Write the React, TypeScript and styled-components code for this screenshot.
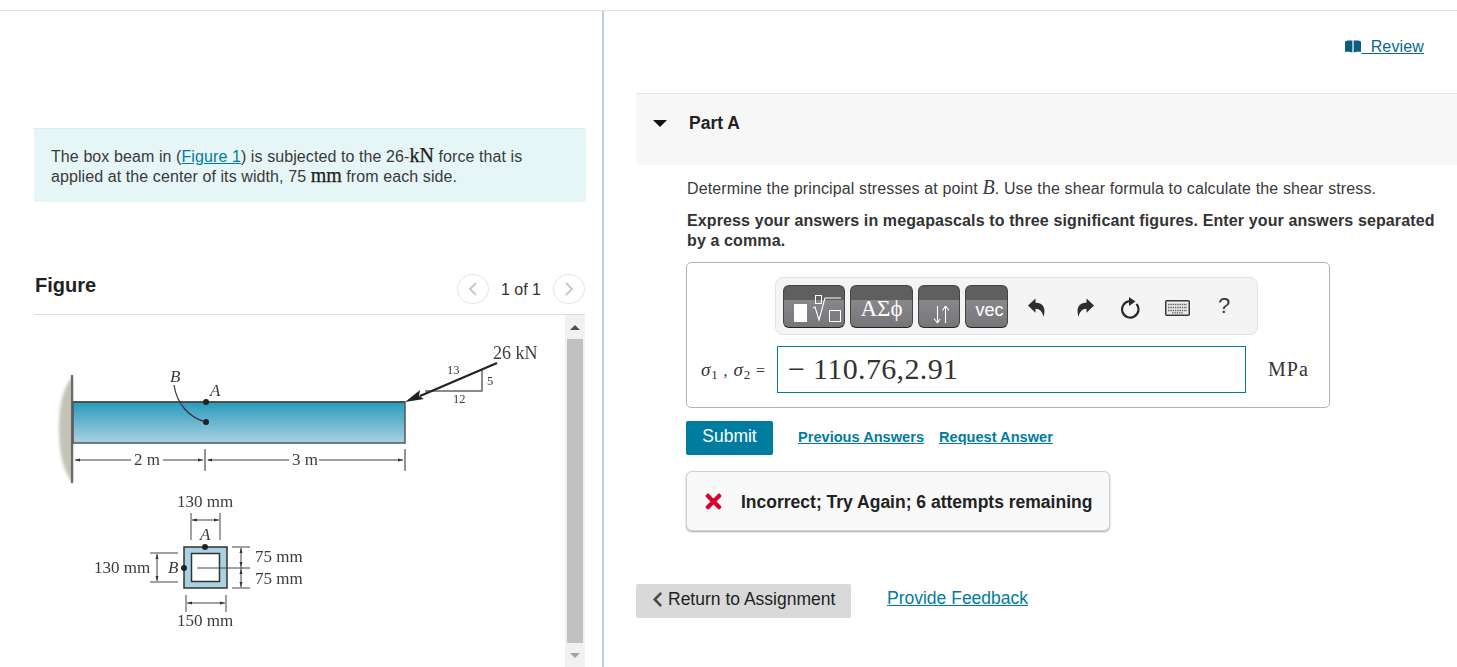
import React from "react";
import styled, { createGlobalStyle } from "styled-components";
import { FaChevronLeft, FaTimes } from "react-icons/fa";

const Global = createGlobalStyle`
  html, body { margin: 0; padding: 0; background: #fff; }
  body { font-family: "Liberation Sans", Arial, sans-serif; color: #333; font-size: 16px; }
`;

const Page = styled.div`
  box-sizing: border-box;
  width: 1457px;
  height: 667px;
  padding-top: 10px;
  overflow: hidden;
`;
const Columns = styled.div`
  display: grid;
  grid-template-columns: 604px 1fr;
  height: 657px;
  border-top: 1px solid #e3e3e3;
`;
const LeftCol = styled.section`
  display: flex;
  flex-direction: column;
  padding: 117px 17px 0 34px;
  border-right: 2px solid #bccfe2;
  box-sizing: border-box;
  height: 656px;
`;
const Intro = styled.div`
  box-sizing: border-box;
  height: 74px;
  margin-right: -1px;
  padding: 18px 17px 0;
  background: #e6f5f6;
  border-top: 1px solid #dcecee;
  line-height: 20px;
  font-size: 16px;
  letter-spacing: 0.09px;
  color: #3a3a3a;
`;
const FigLink = styled.a`
  color: #007c9e;
  text-decoration: underline;
`;
const Serif = styled.span`
  font-family: "Liberation Serif", serif;
  font-size: 20px;
  line-height: 0;
`;
const MathUnit = styled(Serif)`
  color: #222;
  letter-spacing: 0;
  -webkit-text-stroke: 0.25px #222;
`;
const FigureHead = styled.div`
  display: flex;
  align-items: center;
  justify-content: space-between;
  box-sizing: border-box;
  height: 45px;
  margin-top: 68px;
  padding-bottom: 9px;
  border-bottom: 1px solid #dcdcdc;
`;
const FigureTitle = styled.h2`
  margin: 0 0 4px 1px;
  font-size: 20px;
  font-weight: 700;
  color: #222;
`;
const Pager = styled.div`
  display: flex;
  align-items: center;
  gap: 12px;
  margin-top: 2px;
  font-size: 16px;
  color: #333;
`;
const PagerText = styled.span`
  margin-top: 2px;
`;
const PagerBtn = styled.span`
  box-sizing: border-box;
  width: 32px;
  height: 30px;
  border: 1px solid #e4e4e4;
  border-radius: 50%;
  display: flex;
  align-items: center;
  justify-content: center;
`;
const FigureScroll = styled.div`
  display: flex;
  height: 352px;
`;
const FigureSvg = styled.svg`
  display: block;
  width: 531px;
  height: 352px;
  flex: none;
  filter: blur(0.35px);
`;
const Scrollbar = styled.div`
  width: 20px;
  height: 352px;
  background: #f1f1f1;
  display: flex;
  flex-direction: column;
  align-items: center;
  padding: 0 2px;
  box-sizing: border-box;
`;
const ScrollArrow = styled.div<{ $down?: boolean }>`
  height: 24px;
  flex: none;
  display: flex;
  align-items: center;
  justify-content: center;
  &::before {
    content: "";
    border-left: 5px solid transparent;
    border-right: 5px solid transparent;
    ${(p) => (p.$down ? "border-top: 5px solid #a3a3a3;" : "border-bottom: 5px solid #505050;")}
  }
`;
const ScrollThumb = styled.div`
  width: 16px;
  height: 304px;
  background: #c1c1c1;
  flex: none;
`;

const RightCol = styled.section`
  padding-left: 32px;
`;
const ReviewRow = styled.div`
  display: flex;
  justify-content: flex-end;
  height: 82px;
  padding: 26px 33px 0 0;
  box-sizing: border-box;
`;
const ReviewLink = styled.a`
  display: flex;
  align-items: flex-start;
  color: #0a6a8a;
  text-decoration: underline;
  font-size: 16px;
  letter-spacing: 0.15px;
  line-height: 20px;
  white-space: pre;
`;
const BookIcon = styled.svg`
  width: 16px;
  height: 13px;
  margin-top: 3px;
`;
const PartHeader = styled.div`
  box-sizing: border-box;
  height: 72px;
  display: flex;
  align-items: center;
  background: #f7f7f7;
  border-top: 1px solid #e4e4e4;
  padding: 0 0 12px 17px;
`;
const Caret = styled.span`
  width: 0;
  height: 0;
  border-left: 7px solid transparent;
  border-right: 7px solid transparent;
  border-top: 7px solid #111;
  margin-right: 22px;
`;
const PartTitle = styled.h3`
  margin: 0;
  font-size: 17.5px;
  font-weight: 700;
  color: #222;
`;
const PartBody = styled.div`
  padding: 14px 15px 0 50px;
`;
const Question = styled.p`
  margin: 0 0 0 1px;
  line-height: 20px;
  letter-spacing: 0.13px;
  color: #3a3a3a;
`;
const Instruction = styled.p`
  margin: 12px 0 0 1px;
  line-height: 20px;
  letter-spacing: 0.12px;
  font-weight: 700;
  color: #333;
`;
const AnswerBox = styled.div`
  box-sizing: border-box;
  width: 644px;
  height: 146px;
  margin-top: 11px;
  border: 1px solid #b3b3b3;
  border-radius: 5px;
  padding: 14px 0 0 14px;
`;
const Toolbar = styled.div`
  box-sizing: border-box;
  width: 483px;
  height: 58px;
  margin-left: 74px;
  background: #f4f4f4;
  border: 1px solid #e2e2e2;
  border-radius: 8px;
  display: flex;
  align-items: center;
  padding: 0 0 0 7px;
`;
const TemplateBtn = styled.div<{ $w: number }>`
  box-sizing: border-box;
  width: ${(p) => p.$w}px;
  height: 43px;
  margin-right: 5px;
  border-radius: 6px;
  border: 1px solid #444;
  border-bottom: 1.5px solid #222;
  background: linear-gradient(#5f5f5f 0, #5f5f5f 14px, #88888c 14px, #76767a 100%);
  color: #fff;
  display: flex;
  align-items: flex-end;
  justify-content: center;
  overflow: hidden;
`;
const BtnGlyphs = styled.span`
  font-family: "Liberation Serif", serif;
  font-size: 23px;
  line-height: 36px;
`;
const BtnVec = styled.span`
  font-size: 18px;
  line-height: 34px;
  padding-left: 6px;
`;
const RootSvg = styled.svg`
  margin-bottom: 2px;
`;
const ArrowsSvg = styled.svg`
  margin: 0 0 2px 6px;
`;
const ToolIcon = styled.div<{ $w: number }>`
  width: ${(p) => p.$w}px;
  display: flex;
  justify-content: center;
  align-items: center;
  color: #3a3a3a;
  font-size: 22px;
  flex: none;
  margin-top: 4px;
`;
const UndoSlot = styled(ToolIcon)`
  margin-left: 3px;
`;
const HelpSlot = styled(ToolIcon)`
  margin-top: 0;
`;
const InputRow = styled.div`
  display: flex;
  align-items: center;
  margin-top: 11px;
`;
const VarLabel = styled.span`
  font-family: "Liberation Serif", serif;
  font-size: 16px;
  width: 76px;
  color: #333;
  letter-spacing: 0.9px;
  white-space: pre;
`;
const Sub = styled.sub`
  font-size: 13px;
  line-height: 0;
  font-style: normal;
  vertical-align: -3px;
`;
const Sigma = styled.i`
  font-size: 19px;
`;
const AnswerInput = styled.div`
  box-sizing: border-box;
  width: 469px;
  height: 47px;
  border: 1px solid #007c9e;
  padding-left: 10px;
  font-family: "Liberation Serif", serif;
  font-size: 30px;
  line-height: 43px;
  color: #333;
  letter-spacing: 0.35px;
  white-space: pre;
`;
const Unit = styled.span`
  font-family: "Liberation Serif", serif;
  font-size: 20px;
  letter-spacing: 1px;
  margin-left: 22px;
  color: #333;
`;
const ActionRow = styled.div`
  display: flex;
  align-items: center;
  margin-top: 13px;
`;
const SubmitBtn = styled.button`
  width: 87px;
  height: 34px;
  border: 0;
  border-radius: 2px;
  background: #007c9e;
  color: #fff;
  font: 17.5px "Liberation Sans", sans-serif;
  padding: 0 0 3px;
  margin-right: 25px;
`;
const ActionLink = styled.a`
  font-size: 14.6px;
  font-weight: 700;
  color: #007c9e;
  text-decoration: underline;
  margin: 0 15px 3px 0;
`;
const Feedback = styled.div`
  box-sizing: border-box;
  display: flex;
  align-items: center;
  width: 424px;
  height: 60px;
  margin: 16px 0 0;
  padding-left: 16px;
  background: #f9f9f9;
  border: 1px solid #d0d0d0;
  border-radius: 6px;
  box-shadow: 0 1px 2px #aaa;
  font-size: 17.5px;
  font-weight: 700;
  color: #222;
  white-space: nowrap;
`;
const FeedbackText = styled.span`
  margin-top: 2px;
`;
const RedX = styled(FaTimes)`
  color: #d9002a;
  font-size: 23px;
  margin-right: 17px;
  flex: none;
  width: 21px;
`;
const FooterRow = styled.div`
  display: flex;
  align-items: center;
  margin-top: 53px;
`;
const ReturnBtn = styled.div`
  box-sizing: border-box;
  width: 215px;
  height: 34px;
  background: #d9d9d9;
  border-radius: 2px;
  display: flex;
  align-items: center;
  padding: 0 0 3px 13px;
  font-size: 17.5px;
  color: #222;
  margin-right: 36px;
`;
const ReturnChevron = styled(FaChevronLeft)`
  color: #4a4a4a;
  font-size: 17px;
  margin-right: 2px;
`;
const FeedbackLink = styled.a`
  font-size: 17.5px;
  color: #007c9e;
  text-decoration: underline;
  margin-bottom: 5px;
`;

const Chevron = ({ d }: { d: string }) => (
  <svg width="12" height="16" viewBox="0 0 12 16" fill="none" stroke="#c8c8c8" strokeWidth="2">
    <path d={d} />
  </svg>
);

const serif = "'Liberation Serif', serif";
const DimText = ({ x, y, children, size = 17 }: { x: number; y: number; children: React.ReactNode; size?: number }) => (
  <text x={x} y={y} fontFamily={serif} fontSize={size} fill="#3c3c3c">{children}</text>
);
const Italic = ({ x, y, children }: { x: number; y: number; children: React.ReactNode }) => (
  <text x={x} y={y} fontFamily={serif} fontSize={17} fontStyle="italic" fill="#3c3c3c">{children}</text>
);
const Head = ({ x, y, dir }: { x: number; y: number; dir: "l" | "r" | "u" | "d" }) => {
  const pts = {
    l: `${x},${y} ${x + 5},${y - 1.5} ${x + 5},${y + 1.5}`,
    r: `${x},${y} ${x - 5},${y - 1.5} ${x - 5},${y + 1.5}`,
    u: `${x},${y} ${x - 1.5},${y + 5} ${x + 1.5},${y + 5}`,
    d: `${x},${y} ${x - 1.5},${y - 5} ${x + 1.5},${y - 5}`,
  }[dir];
  return <polygon points={pts} fill="#333" />;
};

const Drawing = () => (
  <FigureSvg viewBox="34 315 531 352">
    <defs>
      <linearGradient id="beam" x1="0" y1="0" x2="0" y2="1">
        <stop offset="0" stopColor="#279abc" />
        <stop offset="1" stopColor="#abd2e2" />
      </linearGradient>
      <filter id="soft" x="-50%" y="-10%" width="200%" height="120%">
        <feGaussianBlur stdDeviation="1.5" />
      </filter>
    </defs>
    <path d="M73 376 C64 386 59 402 59 428 C59 456 64 472 73 483Z" fill="#c4c4b6" filter="url(#soft)" />
    <g fill="none" stroke="#555" strokeWidth="1">
      <path d="M72 375V483" strokeWidth="2.2" stroke="#6a6a6a" />
      <rect x="73" y="402" width="332" height="41" fill="url(#beam)" strokeWidth="1.5" />
      <path d="M73 402H405" stroke="#444" strokeWidth="1.5" />
      <path d="M174 385C177 405 190 418 206 422" stroke="#333" strokeWidth="1.2" />
      <path d="M75 460H131M163 460H203M208 460H289M319 460H403" stroke="#444" strokeWidth="1.2" />
      <path d="M205 449V471M405 449V471" stroke="#666" strokeWidth="1.4" />
      <path d="M425 391H482V370" stroke="#666" strokeWidth="1.5" />
      <path d="M497 363L420 396" stroke="#222" strokeWidth="2.2" />
      <path d="M191 513V540M220 513V540M192 520H219" stroke="#444" />
      <path d="M150 553H178M150 582H178M157 554V581" stroke="#444" />
      <path d="M232 547H250M232 588H250M241 548V587" stroke="#444" />
      <path d="M186 595V612M226 595V612M187 603H225" stroke="#444" />
    </g>
    <Head x={75} y={460} dir="l" />
    <Head x={203} y={460} dir="r" />
    <Head x={207} y={460} dir="l" />
    <Head x={403} y={460} dir="r" />
    <Head x={192} y={520} dir="l" />
    <Head x={219} y={520} dir="r" />
    <Head x={157} y={554} dir="u" />
    <Head x={157} y={581} dir="d" />
    <Head x={241} y={548} dir="u" />
    <Head x={241} y={567} dir="d" />
    <Head x={241} y={569} dir="u" />
    <Head x={241} y={587} dir="d" />
    <Head x={187} y={603} dir="l" />
    <Head x={225} y={603} dir="r" />
    <path d="M405 402L420 390L419 396L424 399Z" fill="#222" />
    <circle cx="206" cy="402" r="3" fill="#222" />
    <circle cx="206" cy="422" r="3" fill="#222" />
    <path fillRule="evenodd" d="M184 547H227V588H184ZM191.500 553.500V581.500H219.500V553.500Z" fill="#a9d3e2" stroke="#333" strokeWidth="1.5" />
    <path d="M197 568H250" stroke="#444" fill="none" />
    <circle cx="205" cy="547" r="3" fill="#222" />
    <circle cx="184" cy="568" r="3" fill="#222" />
    <Italic x={170} y={382}>B</Italic>
    <Italic x={210} y={396}>A</Italic>
    <DimText x={134} y={465}>2 m</DimText>
    <DimText x={292} y={465}>3 m</DimText>
    <DimText x={493} y={359} size={18}>26 kN</DimText>
    <DimText x={447} y={374} size={12.5}>13</DimText>
    <DimText x={487} y={385} size={12.5}>5</DimText>
    <DimText x={453} y={403} size={12.5}>12</DimText>
    <DimText x={177} y={507}>130 mm</DimText>
    <Italic x={200} y={540}>A</Italic>
    <Italic x={168} y={573}>B</Italic>
    <DimText x={94} y={573}>130 mm</DimText>
    <DimText x={255} y={562}>75 mm</DimText>
    <DimText x={255} y={584}>75 mm</DimText>
    <DimText x={177} y={626}>150 mm</DimText>
  </FigureSvg>
);

const UndoGlyph = ({ flip }: { flip?: boolean }) => (
  <svg width="18" height="20" viewBox="0 0 18 20" style={flip ? { transform: "scaleX(-1)" } : undefined}>
    <path d="M0 7.500L7.500 0.500V4.700C14 4.700 18.500 8.500 15.500 19C14.500 14 12 10.800 7.500 10.800V14.700Z" fill="#2e2e2e" />
  </svg>
);

export default function App() {
  return (
    <Page>
      <Global />
      <Columns>
        <LeftCol>
          <Intro>
            The box beam in (<FigLink>Figure 1</FigLink>) is subjected to the 26-<MathUnit>kN</MathUnit> force that is
            <br />
            applied at the center of its width, 75 <MathUnit>mm</MathUnit> from each side.
          </Intro>
          <FigureHead>
            <FigureTitle>Figure</FigureTitle>
            <Pager>
              <PagerBtn><Chevron d="M9 2L3 8L9 14" /></PagerBtn>
              <PagerText>1 of 1</PagerText>
              <PagerBtn><Chevron d="M3 2L9 8L3 14" /></PagerBtn>
            </Pager>
          </FigureHead>
          <FigureScroll>
            <Drawing />
            <Scrollbar>
              <ScrollArrow />
              <ScrollThumb />
              <ScrollArrow $down />
            </Scrollbar>
          </FigureScroll>
        </LeftCol>
        <RightCol>
          <ReviewRow>
            <ReviewLink>
              <BookIcon viewBox="0 0 16 13">
                <path d="M0 1.500L2.500 0.500H7.400V12.500L4 11.800H0ZM8.600 0.500H13.500L16 1.500V11.800H12L8.600 12.500Z" fill="#0a5f7c" />
              </BookIcon>
              {"  Review"}
            </ReviewLink>
          </ReviewRow>
          <PartHeader>
            <Caret />
            <PartTitle>Part A</PartTitle>
          </PartHeader>
          <PartBody>
            <Question>
              Determine the principal stresses at point <Serif as="i">B</Serif>. Use the shear formula to calculate the shear stress.
            </Question>
            <Instruction>
              Express your answers in megapascals to three significant figures. Enter your answers separated by a comma.
            </Instruction>
            <AnswerBox>
              <Toolbar>
                <TemplateBtn $w={62}>
                  <RootSvg width="56" height="30" viewBox="0 0 56 30" fill="none">
                    <rect x="8" y="9" width="13" height="18" fill="#fff" />
                    <path d="M27 13L29 12L33 25L39 3H55" stroke="#fff" strokeWidth="1.1" />
                    <rect x="29.500" y="0.500" width="6" height="8" stroke="#fff" />
                    <rect x="43.500" y="15.500" width="11" height="11" stroke="#fff" />
                  </RootSvg>
                </TemplateBtn>
                <TemplateBtn $w={63}><BtnGlyphs>ΑΣϕ</BtnGlyphs></TemplateBtn>
                <TemplateBtn $w={42}>
                  <ArrowsSvg width="22" height="22" viewBox="0 0 22 22" fill="none" stroke="#fff" strokeWidth="1.1">
                    <path d="M6.500 3V20M6.500 20L3 15.500M6.500 20L9 16" />
                    <path d="M14.500 20V3M14.500 3L11.500 7.500M14.500 3L18 7.500" />
                  </ArrowsSvg>
                </TemplateBtn>
                <TemplateBtn $w={43}><BtnVec>vec</BtnVec></TemplateBtn>
                <UndoSlot $w={41}><UndoGlyph /></UndoSlot>
                <ToolIcon $w={55}><UndoGlyph flip /></ToolIcon>
                <ToolIcon $w={36}>
                  <svg width="22" height="22" viewBox="0 0 22 22" fill="none">
                    <path d="M10.500 4.200A8.200 8.200 0 1 0 17.500 7" stroke="#2b2b2b" strokeWidth="2.200" />
                    <path d="M10 0L16.500 4.500L10 9Z" fill="#2b2b2b" />
                  </svg>
                </ToolIcon>
                <ToolIcon $w={58}>
                  <svg width="25" height="16" viewBox="0 0 25 16">
                    <rect x="0.750" y="0.750" width="23.500" height="14.500" rx="1" fill="#eee" stroke="#3a3a3a" strokeWidth="1.500" />
                    <path d="M3 4.500H22M3 7.500H22M3 10.500H22M7 12.800H18" stroke="#666" strokeWidth="1.300" strokeDasharray="1.500 0.800" />
                  </svg>
                </ToolIcon>
                <HelpSlot $w={36}>?</HelpSlot>
              </Toolbar>
              <InputRow>
                <VarLabel>
                  <Sigma>σ</Sigma><Sub>1</Sub> , <Sigma>σ</Sigma><Sub>2</Sub> =
                </VarLabel>
                <AnswerInput>− 110.76,2.91</AnswerInput>
                <Unit>MPa</Unit>
              </InputRow>
            </AnswerBox>
            <ActionRow>
              <SubmitBtn>Submit</SubmitBtn>
              <ActionLink>Previous Answers</ActionLink>
              <ActionLink>Request Answer</ActionLink>
            </ActionRow>
            <Feedback>
              <RedX />
              <FeedbackText>Incorrect; Try Again; 6 attempts remaining</FeedbackText>
            </Feedback>
          </PartBody>
          <FooterRow>
            <ReturnBtn><ReturnChevron />Return to Assignment</ReturnBtn>
            <FeedbackLink>Provide Feedback</FeedbackLink>
          </FooterRow>
        </RightCol>
      </Columns>
    </Page>
  );
}
